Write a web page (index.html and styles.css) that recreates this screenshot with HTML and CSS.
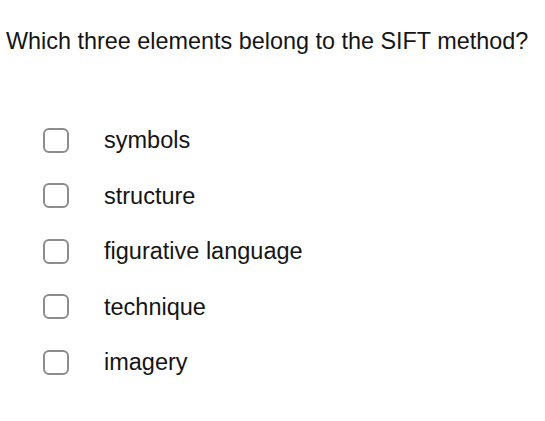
FILE: index.html
```html
<!DOCTYPE html>
<html>
<head>
<meta charset="utf-8">
<link rel="stylesheet" href="styles.css">
</head>
<body>
<div class="question">
  <h1 class="title">Which three elements belong to the SIFT method?</h1>
  <ul class="options">
    <li class="option"><span class="box"></span><span class="label">symbols</span></li>
    <li class="option"><span class="box"></span><span class="label">structure</span></li>
    <li class="option"><span class="box"></span><span class="label">figurative language</span></li>
    <li class="option"><span class="box"></span><span class="label">technique</span></li>
    <li class="option"><span class="box"></span><span class="label">imagery</span></li>
  </ul>
</div>
</body>
</html>
```
FILE: styles.css
```css
html, body {
  margin: 0;
  padding: 0;
  background: #ffffff;
}
body {
  font-family: "Liberation Sans", Arial, sans-serif;
  color: #151515;
}
.question {
  padding: 26px 0 0 6px;
}
.title {
  margin: 0;
  font-size: 23.4px;
  font-weight: normal;
  line-height: 30px;
  white-space: nowrap;
}
.options {
  list-style: none;
  margin: 0;
  padding: 0;
  padding-top: 71px;
  padding-left: 37px;
  display: flex;
  flex-direction: column;
  gap: 29.5px;
}
.option {
  display: flex;
  align-items: center;
  height: 26px;
}
.box {
  box-sizing: border-box;
  width: 26px;
  height: 25px;
  border: 2px solid #8c8c8c;
  border-radius: 6px;
  flex: none;
}
.label {
  margin-left: 35px;
  font-size: 23.5px;
  line-height: 26px;
}
```
